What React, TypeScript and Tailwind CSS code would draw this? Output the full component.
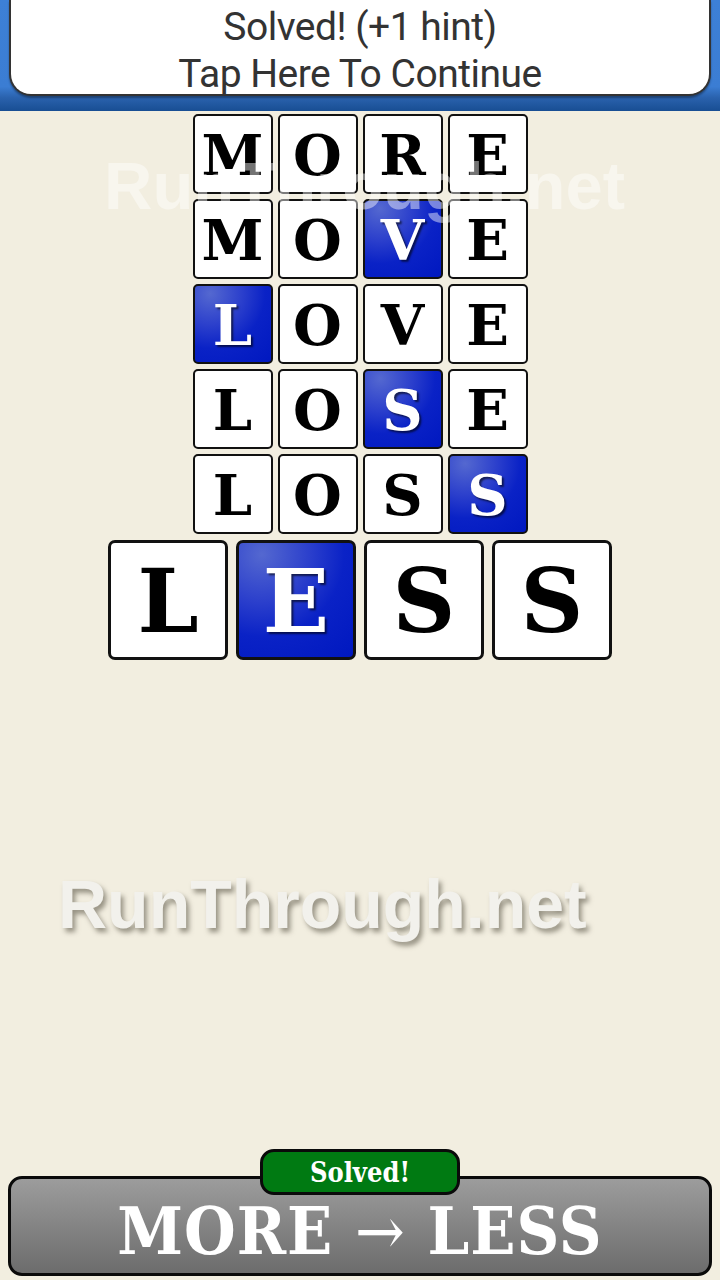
import React from 'react'

const rows: { word: string; hi: number }[] = [
  { word: 'MORE', hi: -1 },
  { word: 'MOVE', hi: 2 },
  { word: 'LOVE', hi: 0 },
  { word: 'LOSE', hi: 2 },
  { word: 'LOSS', hi: 3 },
]

const serif = { fontFamily: '"DejaVu Serif", "Liberation Serif", serif' }
const condensed = { fontFamily: '"DejaVu Serif Condensed", "DejaVu Serif", "Liberation Serif", serif' }

function Tile({ letter, blue, big }: { letter: string; blue: boolean; big?: boolean }) {
  const size = big ? 'w-[120px] h-[120px] text-[87px] rounded-[7px] border-[3px]' : 'w-[80px] h-[80px] text-[56px] rounded-[5px] border-2'
  const face = blue
    ? 'bg-[radial-gradient(circle_at_20%_10%,#5468d0_0%,#2b3fcc_35%,#0a22c6_60%,#0018c0_100%)] text-white [text-shadow:2px_2px_2px_rgba(0,0,0,0.6)]'
    : 'bg-white text-black'
  return (
    <div
      className={`${size} ${face} border-[#111] flex items-center justify-center font-bold leading-none`}
      style={serif}
    >
      <span className={big ? 'mt-[2px]' : 'mt-[1px]'}>{letter}</span>
    </div>
  )
}

export default function App() {
  return (
    <div className="relative w-[720px] h-[1280px] bg-[#f2eee0] flex flex-col overflow-hidden">
      {/* header */}
      <div className="h-[111px] bg-[linear-gradient(to_bottom,#3d80d6_0%,#3b7dd3_78%,#2a62ad_88%,#184e93_100%)] px-[9px] shrink-0">
        <div
          className="h-[96px] bg-white border-2 border-t-0 border-[#333] rounded-b-[22px] shadow-[0_2px_2px_rgba(0,0,0,0.35)] flex flex-col items-center justify-center text-[#333] text-[39px] leading-[47px] pt-[7px]"
          style={{ fontFamily: 'Roboto, "Liberation Sans", sans-serif' }}
        >
          <div className="tracking-[-0.5px]">Solved! (+1 hint)</div>
          <div className="tracking-[-0.5px]">Tap Here To Continue</div>
        </div>
      </div>

      {/* word ladder */}
      <div className="flex flex-col items-center gap-[5px] mt-[3px]">
        {rows.map((r) => (
          <div key={r.word} className="flex gap-[5px]">
            {r.word.split('').map((ch, i) => (
              <Tile key={i} letter={ch} blue={i === r.hi} />
            ))}
          </div>
        ))}
      </div>

      {/* target word */}
      <div className="flex justify-center gap-[8px] mt-[6px]">
        {'LESS'.split('').map((ch, i) => (
          <Tile key={i} letter={ch} blue={i === 1} big />
        ))}
      </div>

      <div className="flex-1" />

      {/* bottom bar */}
      <div className="relative mx-[8px] mb-[4px] h-[100px] rounded-[14px] border-[3px] border-[#0a0a0a] bg-[linear-gradient(to_bottom,#9c9c9c,#6c6c6c)] flex items-center justify-center">
        <span className="text-white font-bold text-[66px] leading-none mt-[10px] tracking-[1px]" style={condensed}>
          MORE <span className="font-normal">→</span> LESS
        </span>
        <div className="absolute left-1/2 -translate-x-1/2 -top-[30px] w-[200px] h-[46px] rounded-[14px] border-[3px] border-[#0a0a0a] bg-[#007a12] flex items-center justify-center">
          <span className="text-white font-bold text-[27px] leading-none" style={condensed}>
            Solved!
          </span>
        </div>
      </div>

      {/* watermarks */}
      <div
        className="absolute left-[104px] top-[152px] w-[520px] text-center text-[67px] font-bold leading-none text-white/45 pointer-events-none"
        style={{ fontFamily: '"Liberation Sans", Arial, sans-serif' }}
      >
        RunThrough.net
      </div>
      <div
        className="absolute left-[58px] top-[870px] w-[528px] text-center text-[68px] font-bold leading-none text-[#f2f1ec] [text-shadow:3px_4px_5px_rgba(90,85,70,0.6)] pointer-events-none"
        style={{ fontFamily: '"Liberation Sans", Arial, sans-serif' }}
      >
        RunThrough.net
      </div>
    </div>
  )
}
